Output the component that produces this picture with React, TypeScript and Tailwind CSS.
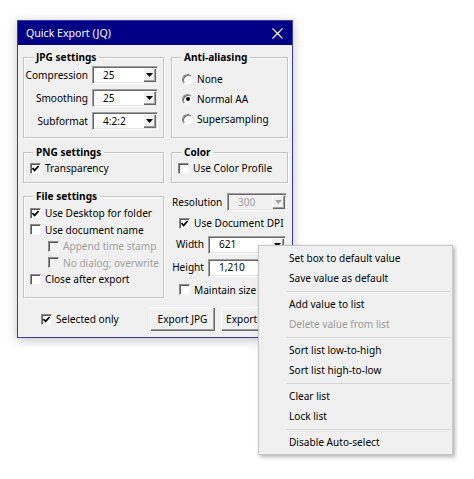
import React from "react";

function Check({ checked = false, disabled = false }: { checked?: boolean; disabled?: boolean }) {
  return (
    <span
      className={`flex h-[11px] w-[11px] shrink-0 items-center justify-center border border-t-[#8a8a8a] border-l-[#8a8a8a] border-r-[#f4f4f4] border-b-[#f4f4f4] shadow-[inset_1px_1px_0_#5a5a5a] ${
        disabled ? "bg-[#f0f0f0]" : "bg-white"
      }`}
    >
      {checked && (
        <svg width="9" height="9" viewBox="0 0 9 9">
          <path d="M1.5 4.2 L3.6 6.4 L7.6 2" fill="none" stroke="#000" strokeWidth="1.7" />
        </svg>
      )}
    </span>
  );
}

function Radio({ checked = false }: { checked?: boolean }) {
  return (
    <span className="flex h-[11px] w-[11px] shrink-0 items-center justify-center rounded-full border border-t-[#8a8a8a] border-l-[#8a8a8a] border-r-[#f4f4f4] border-b-[#f4f4f4] bg-white shadow-[inset_1px_1px_0_#6a6a6a]">
      {checked && <span className="h-[4px] w-[4px] rounded-full bg-black" />}
    </span>
  );
}

function Combo({ value, disabled = false, className = "" }: { value: string; disabled?: boolean; className?: string }) {
  return (
    <div
      className={`flex h-[18px] items-center border border-t-[#a0a0a0] border-l-[#a0a0a0] border-r-white border-b-white shadow-[inset_1px_1px_0_#696969,inset_-1px_-1px_0_#e3e3e3] ${
        disabled ? "bg-[#f0f0f0] text-[#a0a0a0]" : "bg-white"
      } ${className}`}
    >
      <span className="flex-1 pl-[10px]">{value}</span>
      <span className="mr-[1px] flex h-[14px] w-[13px] items-center justify-center bg-[#f0f0f0] shadow-[inset_1px_1px_0_#fff,inset_-1px_-1px_0_#696969,inset_-2px_-2px_0_#a0a0a0]">
        <svg width="7" height="4" viewBox="0 0 7 4">
          <path d="M0 0 H7 L3.5 4 Z" fill={disabled ? "#a0a0a0" : "#000"} />
        </svg>
      </span>
    </div>
  );
}

function Group({ title, className = "", children }: { title: string; className?: string; children?: React.ReactNode }) {
  return (
    <div className={`relative border border-[#c4c4c4] shadow-[inset_1px_1px_0_#fff,1px_1px_0_#fff] ${className}`}>
      <span className="absolute left-[9px] top-[-9px] bg-[#f0f0f0] px-[3px] font-bold leading-[16px]">{title}</span>
      {children}
    </div>
  );
}

function Item({ children, checked, disabled, className = "" }: { children: React.ReactNode; checked?: boolean; disabled?: boolean; className?: string }) {
  return (
    <div className={`flex h-[16.5px] items-center gap-[4px] whitespace-nowrap ${disabled ? "text-[#a0a0a0]" : ""} ${className}`}>
      <Check checked={checked} disabled={disabled} />
      <span>{children}</span>
    </div>
  );
}

const menu: (string | null)[] = [
  "Set box to default value",
  "Save value as default",
  null,
  "Add value to list",
  "Delete value from list",
  null,
  "Sort list low-to-high",
  "Sort list high-to-low",
  null,
  "Clear list",
  "Lock list",
  null,
  "Disable Auto-select",
];

export default function App() {
  return (
    <div className="relative h-[479px] w-[474px] overflow-hidden bg-white font-['Noto_Sans',sans-serif] text-[10.1px] leading-none text-black">
      {/* Dialog window */}
      <div className="ml-[17px] mt-[20px] h-[318px] w-[276px] border border-[#3c3ca6] bg-[#f0f0f0] shadow-[0_2px_10px_rgba(0,0,0,0.25)]">
        <div className="flex h-[24px] items-center justify-between bg-[#000086] pl-[8px] pr-[9px] text-[10.6px] text-white">
          <span>Quick Export (JQ)</span>
          <svg width="11" height="11" viewBox="0 0 11 11">
            <path d="M0.5 0.5 L10.5 10.5 M10.5 0.5 L0.5 10.5" stroke="#fff" strokeWidth="1.1" />
          </svg>
        </div>

        <div className="pl-[5px] pr-[4px]">
          {/* JPG + Anti-aliasing */}
          <div className="mt-[12px] grid grid-cols-[141px_117px] gap-x-[7px]">
            <Group title="JPG settings" className="h-[81px]">
              <div className="grid grid-cols-[64px_66px] items-center gap-x-[4px] gap-y-[5px] pt-[8px]">
                <span className="text-right">Compression</span>
                <Combo value="25" />
                <span className="text-right">Smoothing</span>
                <Combo value="25" />
                <span className="text-right">Subformat</span>
                <Combo value="4:2:2" />
              </div>
            </Group>
            <Group title="Anti-aliasing" className="h-[81px]">
              <div className="flex flex-col gap-[4px] pl-[10px] pt-[13px]">
                <div className="flex h-[16px] items-center gap-[4px]">
                  <Radio />
                  <span>None</span>
                </div>
                <div className="flex h-[16px] items-center gap-[4px]">
                  <Radio checked />
                  <span>Normal AA</span>
                </div>
                <div className="flex h-[16px] items-center gap-[4px]">
                  <Radio />
                  <span>Supersampling</span>
                </div>
              </div>
            </Group>
          </div>

          {/* PNG + Color */}
          <div className="mt-[14px] grid grid-cols-[141px_117px] gap-x-[7px]">
            <Group title="PNG settings" className="h-[31px]">
              <div className="pl-[6px] pt-[7px]">
                <Item checked>Transparency</Item>
              </div>
            </Group>
            <Group title="Color" className="h-[31px]">
              <div className="pl-[6px] pt-[7px]">
                <Item>Use Color Profile</Item>
              </div>
            </Group>
          </div>

          {/* File settings + size controls */}
          <div className="mt-[10px] grid grid-cols-[141px_117px] gap-x-[7px]">
            <Group title="File settings" className="mt-[3px] h-[102px]">
              <div className="pl-[6px] pt-[8px]">
                <Item checked>Use Desktop for folder</Item>
                <Item>Use document name</Item>
                <Item disabled className="ml-[18px]">Append time stamp</Item>
                <Item disabled className="ml-[18px]">No dialog; overwrite</Item>
                <Item>Close after export</Item>
              </div>
            </Group>
            <div className="flex flex-col">
              <div className="flex items-center">
                <span className="pl-[1px]">Resolution</span>
                <Combo value="300" disabled className="ml-auto mr-[1px] w-[60px]" />
              </div>
              <div className="mt-[4px] pl-[8px]">
                <Item checked>Use Document DPI</Item>
              </div>
              <div className="mt-[4px] flex items-center gap-[4px]">
                <span className="w-[33px] text-right">Width</span>
                <Combo value="621" className="w-[78px]" />
              </div>
              <div className="mt-[5px] flex items-center gap-[4px]">
                <span className="w-[33px] text-right">Height</span>
                <Combo value="1,210" className="w-[78px]" />
              </div>
              <div className="mt-[5px] pl-[8px]">
                <Item>Maintain size</Item>
              </div>
            </div>
          </div>

          {/* Bottom row */}
          <div className="mt-[9px] flex items-center">
            <div className="w-[127px] pl-[18px]">
              <Item checked>Selected only</Item>
            </div>
            <button className="h-[24px] w-[65px] bg-[#f0f0f0] shadow-[inset_1px_1px_0_#fff,inset_-1px_-1px_0_#696969,inset_-2px_-2px_0_#a0a0a0]">
              Export JPG
            </button>
            <button className="ml-[6px] h-[24px] w-[65px] bg-[#f0f0f0] shadow-[inset_1px_1px_0_#fff,inset_-1px_-1px_0_#696969,inset_-2px_-2px_0_#a0a0a0]">
              Export PNG
            </button>
          </div>
        </div>
      </div>

      {/* Context menu */}
      <div className="absolute left-[258px] top-[245px] w-[195px] border border-[#c6c6c6] bg-[#f0f0f0] py-[2px] shadow-[2px_2px_4px_rgba(0,0,0,0.3)]">
        {menu.map((m, i) =>
          m === null ? (
            <div key={i} className="flex h-[6px] items-center pl-[27px] pr-[2px]">
              <div className="h-px w-full bg-[#d7d7d7]" />
            </div>
          ) : (
            <div
              key={i}
              className={`flex h-[20px] items-center pl-[30px] ${m.startsWith("Delete") ? "text-[#9a9a9a]" : ""}`}
            >
              {m}
            </div>
          )
        )}
      </div>
    </div>
  );
}
